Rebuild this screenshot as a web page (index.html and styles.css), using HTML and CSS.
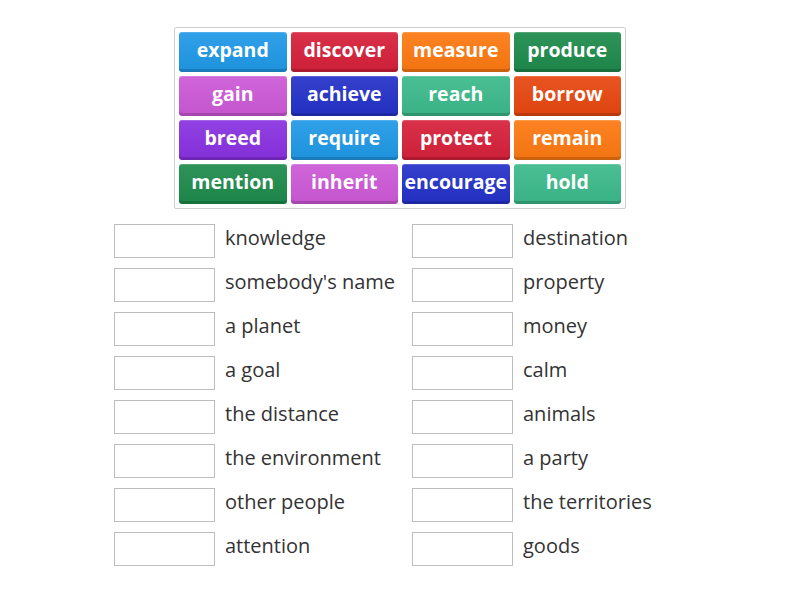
FILE: index.html
```html
<!DOCTYPE html>
<html>
<head>
<meta charset="utf-8">
<link rel="stylesheet" href="styles.css">
</head>
<body>
<div class="page">
  <div class="bank">
    <div class="tile c-blue">expand</div>
    <div class="tile c-red">discover</div>
    <div class="tile c-orange">measure</div>
    <div class="tile c-green">produce</div>
    <div class="tile c-pink">gain</div>
    <div class="tile c-navy">achieve</div>
    <div class="tile c-teal">reach</div>
    <div class="tile c-rust">borrow</div>
    <div class="tile c-purple">breed</div>
    <div class="tile c-blue">require</div>
    <div class="tile c-red">protect</div>
    <div class="tile c-orange">remain</div>
    <div class="tile c-green">mention</div>
    <div class="tile c-pink">inherit</div>
    <div class="tile c-navy">encourage</div>
    <div class="tile c-teal">hold</div>
  </div>
  <div class="pairs">
    <div class="item"><div class="slot"></div><span class="label">knowledge</span></div>
    <div class="item"><div class="slot"></div><span class="label">destination</span></div>
    <div class="item"><div class="slot"></div><span class="label">somebody's name</span></div>
    <div class="item"><div class="slot"></div><span class="label">property</span></div>
    <div class="item"><div class="slot"></div><span class="label">a planet</span></div>
    <div class="item"><div class="slot"></div><span class="label">money</span></div>
    <div class="item"><div class="slot"></div><span class="label">a goal</span></div>
    <div class="item"><div class="slot"></div><span class="label">calm</span></div>
    <div class="item"><div class="slot"></div><span class="label">the distance</span></div>
    <div class="item"><div class="slot"></div><span class="label">animals</span></div>
    <div class="item"><div class="slot"></div><span class="label">the environment</span></div>
    <div class="item"><div class="slot"></div><span class="label">a party</span></div>
    <div class="item"><div class="slot"></div><span class="label">other people</span></div>
    <div class="item"><div class="slot"></div><span class="label">the territories</span></div>
    <div class="item"><div class="slot"></div><span class="label">attention</span></div>
    <div class="item"><div class="slot"></div><span class="label">goods</span></div>
  </div>
</div>
</body>
</html>
```

FILE: styles.css
```css
html, body {
  margin: 0;
  padding: 0;
  background: #ffffff;
}

.page {
  width: 800px;
  height: 600px;
  padding-top: 27px;
  box-sizing: border-box;
  font-family: "Open Sans", "Liberation Sans", sans-serif;
}

.bank {
  width: 452px;
  margin: 0 auto;
  box-sizing: border-box;
  border: 1px solid #cfcfcf;
  border-radius: 2px;
  padding: 4px;
  display: grid;
  grid-template-columns: repeat(4, 1fr);
  grid-auto-rows: 40px;
  gap: 4px;
}

.tile {
  border-radius: 3px;
  color: #ffffff;
  font-weight: 700;
  font-size: 19.5px;
  display: flex;
  align-items: center;
  justify-content: center;
  padding-bottom: 6px;
  box-sizing: border-box;
  white-space: nowrap;
  box-shadow: inset 0 -3px 0 rgba(0, 0, 0, 0.16), inset 0 1px 0 rgba(255, 255, 255, 0.18);
  background-image: linear-gradient(to bottom, rgba(255, 255, 255, 0.08), rgba(0, 0, 0, 0.04));
}

.c-blue { background-color: #1f98e6; }
.c-red { background-color: #d5203a; }
.c-orange { background-color: #fc7811; }
.c-green { background-color: #1d8a4b; }
.c-pink { background-color: #cc58d6; }
.c-navy { background-color: #2431c8; }
.c-teal { background-color: #3bb98a; }
.c-rust { background-color: #e6460f; }
.c-purple { background-color: #8831e0; }

.pairs {
  margin-top: 15px;
  padding-left: 114px;
  display: grid;
  grid-template-columns: 298px 298px;
  grid-auto-rows: 34px;
  row-gap: 10px;
}

.item {
  display: flex;
  align-items: center;
}

.slot {
  width: 101px;
  height: 34px;
  box-sizing: border-box;
  border: 1px solid #bdbdbd;
  background: #ffffff;
  flex: none;
}

.label {
  margin-left: 10px;
  font-size: 20px;
  color: #333333;
  margin-top: -7px;
  white-space: nowrap;
}
```
